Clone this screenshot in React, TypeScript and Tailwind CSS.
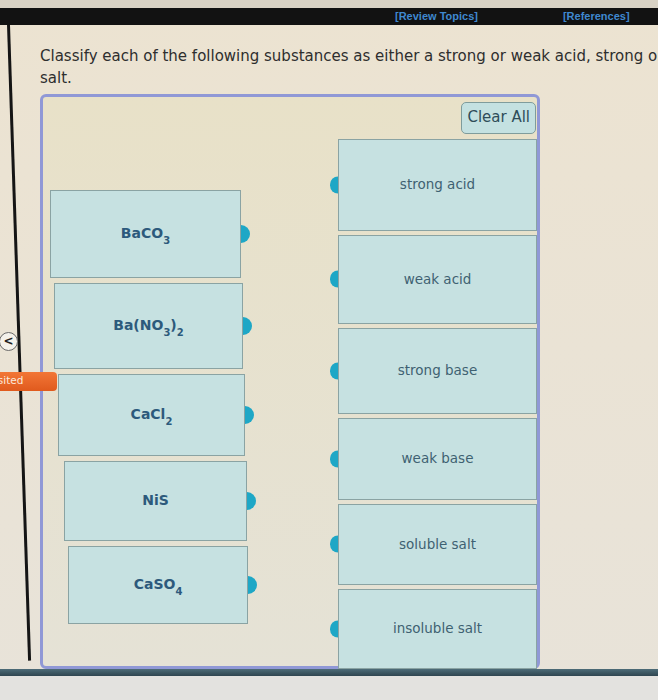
import React from "react";

const Sub = ({ children }: { children: React.ReactNode }) => (
  <sub className="text-[10px] align-[-3px]">{children}</sub>
);

const substances: { label: React.ReactNode; cls: string }[] = [
  { label: <>BaCO<Sub>3</Sub></>, cls: "h-[88px] ml-[0px] w-[191px]" },
  { label: <>Ba(NO<Sub>3</Sub>)<Sub>2</Sub></>, cls: "h-[86px] ml-[4px] w-[189px]" },
  { label: <>CaCl<Sub>2</Sub></>, cls: "h-[82px] ml-[8px] w-[187px]" },
  { label: <>NiS</>, cls: "h-[80px] ml-[14px] w-[183px]" },
  { label: <>CaSO<Sub>4</Sub></>, cls: "h-[78px] ml-[18px] w-[180px]" },
];

const bins: { label: string; h: string }[] = [
  { label: "strong acid", h: "h-[92px]" },
  { label: "weak acid", h: "h-[89px]" },
  { label: "strong base", h: "h-[86px]" },
  { label: "weak base", h: "h-[82px]" },
  { label: "soluble salt", h: "h-[81px]" },
  { label: "insoluble salt", h: "h-[80px]" },
];

const SubstanceCard = ({ label, cls }: { label: React.ReactNode; cls: string }) => (
  <div className={`relative ${cls} border border-[#8aa3a3] bg-[#c6e1e1] flex items-center justify-center`}>
    <span className="text-[14px] font-bold text-[#2d5a7c]">{label}</span>
    <div className="absolute right-[-10px] top-1/2 -translate-y-1/2 w-[9px] h-[18px] rounded-r-full bg-[#1ea7c6]" />
  </div>
);

const BinCard = ({ label, h }: { label: string; h: string }) => (
  <div className={`relative ${h} w-[199px] border border-[#8aa3a3] bg-[#c6e1e1] flex items-center justify-center`}>
    <span className="text-[13.5px] text-[#3f6172]">{label}</span>
    <div className="absolute left-[-9px] top-1/2 -translate-y-1/2 w-[8px] h-[17px] rounded-l-full bg-[#1ea7c6]" />
  </div>
);

export default function App() {
  return (
    <div
      className="relative w-[658px] h-[700px] overflow-hidden flex flex-col bg-gradient-to-b from-[#ece3d1] to-[#e8e3d9]"
      style={{ fontFamily: '"DejaVu Sans", Verdana, sans-serif' }}
    >
      {/* top strip */}
      <div className="h-[8px] bg-[#d8d2c5]" />
      <div className="h-[17px] bg-[#121212] flex items-center text-[11px] font-bold text-[#3f88cf]" style={{ fontFamily: '"Liberation Sans", Arial, sans-serif' }}>
        <span className="ml-[395px]">[Review Topics]</span>
        <span className="ml-[85px]">[References]</span>
      </div>

      <div className="flex flex-1">
        {/* left rail */}
        <div className="relative w-[40px] shrink-0">
          <div className="absolute left-[7px] top-0 w-[3px] h-[636px] bg-[#151515] origin-top -rotate-[1.9deg]" />
          <div className="absolute left-[-1px] top-[307px] w-[19px] h-[19px] rounded-full bg-[#f4f1ea] border border-[#6a6a6a] flex items-center justify-center text-[12px] font-bold text-[#222]">
            &lt;
          </div>
          <div className="absolute left-[-16px] top-[347px] w-[73px] h-[19px] rounded-r-[4px] bg-gradient-to-b from-[#f27636] to-[#e05a1d] flex items-center pl-[4px] text-[10.5px] text-[#fbe9dc]">
            Visited
          </div>
        </div>

        {/* content */}
        <div className="flex-1 flex flex-col">
          <div className="pt-[20px] text-[15px] leading-[22px] text-[#2e2e2e]">
            <div className="whitespace-nowrap overflow-hidden">
              Classify each of the following substances as either a strong or weak acid, strong or weak base, or soluble or insoluble
            </div>
            <div>salt.</div>
          </div>

          <div className="mt-[5px] w-[500px] h-[575px] border-[3px] border-[#9098d6] rounded-[6px] bg-gradient-to-b from-[#e8e1c8] to-[#e5e2d6] flex flex-col">
            <div className="flex justify-end pt-[5px] pr-[1px]">
              <button className="h-[32px] px-[5px] rounded-[5px] border border-[#7f9c9c] bg-[#c4e1e1] text-[15px] text-[#2f4d59]">
                Clear All
              </button>
            </div>
            <div className="flex pt-[5px]">
              <div className="flex flex-col gap-[5px] pl-[7px] pt-[51px]">
                {substances.map((s, i) => (
                  <SubstanceCard key={i} label={s.label} cls={s.cls} />
                ))}
              </div>
              <div className="ml-auto flex flex-col gap-[4px]">
                {bins.map((b) => (
                  <BinCard key={b.label} label={b.label} h={b.h} />
                ))}
              </div>
            </div>
          </div>
        </div>
      </div>

      {/* bottom bezel */}
      <div className="h-[8px] bg-gradient-to-b from-[#4d6c78] to-[#2f4550]" />
      <div className="h-[24px] bg-[#e3e2df]" />
    </div>
  );
}
